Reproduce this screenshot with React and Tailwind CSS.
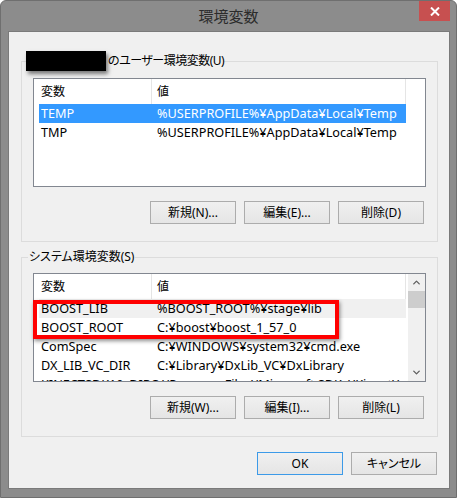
import { ChevronUp, ChevronDown } from "lucide-react";

const userVars = [
  { name: "TEMP", value: "%USERPROFILE%¥AppData¥Local¥Temp" },
  { name: "TMP", value: "%USERPROFILE%¥AppData¥Local¥Temp" },
];

const systemVars = [
  { name: "BOOST_LIB", value: "%BOOST_ROOT%¥stage¥lib" },
  { name: "BOOST_ROOT", value: "C:¥boost¥boost_1_57_0" },
  { name: "ComSpec", value: "C:¥WINDOWS¥system32¥cmd.exe" },
  { name: "DX_LIB_VC_DIR", value: "C:¥Library¥DxLib_VC¥DxLibrary" },
  { name: "KINECTSDK10_DIR", value: "C:¥Program Files¥Microsoft SDKs¥Kinect¥v1.8¥" },
];

function Button({ children, focused }) {
  return (
    <button
      className={`w-[86px] h-[23px] border bg-linear-to-b from-[#f0f0f0] to-[#e5e5e5] text-[12px] text-black leading-none ${
        focused ? "border-[#3c9ae8]" : "border-[#acacac]"
      }`}
    >
      {children}
    </button>
  );
}

function Header() {
  return (
    <div className="flex h-[25px] shrink-0 items-center bg-white text-[12px] text-black">
      <div className="w-[118px] h-full flex items-center pl-[7px] border-r border-[#e5e5e5]">変数</div>
      <div className="w-[254px] h-full flex items-center pl-[5px] border-r border-[#e5e5e5]">値</div>
      <div className="flex-1 h-full" />
    </div>
  );
}

function Row({ item, state }) {
  const bg =
    state === "active"
      ? "bg-[#3399ff] text-white"
      : state === "inactive"
      ? "bg-[#f0f0f0] text-black"
      : "text-black";
  return (
    <div className={`ml-[5px] w-[367px] h-[19px] shrink-0 flex items-center text-[12.7px] leading-[19px] whitespace-nowrap ${bg}`}>
      <div className="w-[118px] pl-[2px]">{item.name}</div>
      <div className="flex-1">{item.value}</div>
    </div>
  );
}

function Scrollbar() {
  return (
    <div className="w-[17px] h-full bg-[#f0f0f0] flex flex-col items-center">
      <div className="h-[17px] flex items-center justify-center text-[#606060]">
        <ChevronUp size={11} strokeWidth={3} />
      </div>
      <div className="w-[17px] h-[17px] bg-[#cdcdcd]" />
      <div className="flex-1" />
      <div className="h-[17px] flex items-center justify-center text-[#606060]">
        <ChevronDown size={11} strokeWidth={3} />
      </div>
    </div>
  );
}

export default function App() {
  return (
    <div className="w-[457px] h-[498px] bg-[#8c8c8c] border border-[#6f6f6f] rounded-t-[6px] relative overflow-hidden font-['Noto_Sans','Noto_Sans_CJK_JP',sans-serif] [font-feature-settings:'palt']">
      {/* title bar */}
      <div className="h-[30px] flex items-center justify-center text-[15px] text-[#2b2b2b] font-['Noto_Sans_CJK_JP',sans-serif]">
        環境変数
      </div>
      <button className="absolute top-0 right-[6px] w-[31px] h-[20px] bg-[#c75050] flex items-center justify-center">
        <svg width="10" height="9" viewBox="0 0 10 9">
          <path d="M1 0.5 L9 8.5 M9 0.5 L1 8.5" stroke="white" strokeWidth="2" />
        </svg>
      </button>

      {/* client area */}
      <div className="ml-[7px] w-[442px] h-[458px] bg-[#f0f0f0] border border-[#7a7a7a] flex flex-col">
        {/* user variables */}
        <fieldset className="ml-[12px] mt-[19px] w-[417px] border border-[#dcdcdc] px-[11px] pb-[17px]">
          <legend className="ml-[-7px] h-[20px] flex items-center text-[12px] text-black">
            <span className="w-[80px] h-[20px] bg-black shadow-[2px_3px_4px_rgba(0,0,0,0.5)]" />
            <span className="ml-[2px] tracking-[-0.5px]">のユーザー環境変数(U)</span>
          </legend>
          <div className="mt-[7px] h-[109px] border border-[#828790] bg-white overflow-hidden">
            <Header />
            {userVars.map((v, i) => (
              <Row key={v.name} item={v} state={i === 0 ? "active" : ""} />
            ))}
          </div>
          <div className="mt-[14px] flex justify-end gap-[8px] pr-[2px]">
            <Button>新規(N)...</Button>
            <Button>編集(E)...</Button>
            <Button>削除(D)</Button>
          </div>
        </fieldset>

        {/* system variables */}
        <fieldset className="ml-[12px] mt-[6px] w-[417px] border border-[#dcdcdc] px-[11px] pb-[17px]">
          <legend className="ml-[-5px] px-[1px] h-[18px] leading-[18px] text-[12px] text-black">
            システム環境変数(S)
          </legend>
          <div className="mt-[7px] h-[109px] border border-[#828790] bg-white flex relative">
            <div className="flex-1 h-full overflow-hidden flex flex-col">
              <Header />
              {systemVars.map((v, i) => (
                <Row key={v.name} item={v} state={i === 0 ? "inactive" : ""} />
              ))}
            </div>
            <Scrollbar />
            {/* red frame around the boost entries */}
            <div className="absolute left-[-1px] top-[26px] w-[306px] h-[39px] border-[4px] border-[#ff0000] shadow-[1px_2px_4px_rgba(0,0,0,0.45)]" />
          </div>
          <div className="mt-[14px] flex justify-end gap-[8px] pr-[2px]">
            <Button>新規(W)...</Button>
            <Button>編集(I)...</Button>
            <Button>削除(L)</Button>
          </div>
        </fieldset>

        <div className="mt-[15px] mr-[12px] flex justify-end gap-[8px]">
          <Button focused>OK</Button>
          <Button>キャンセル</Button>
        </div>
      </div>
    </div>
  );
}
